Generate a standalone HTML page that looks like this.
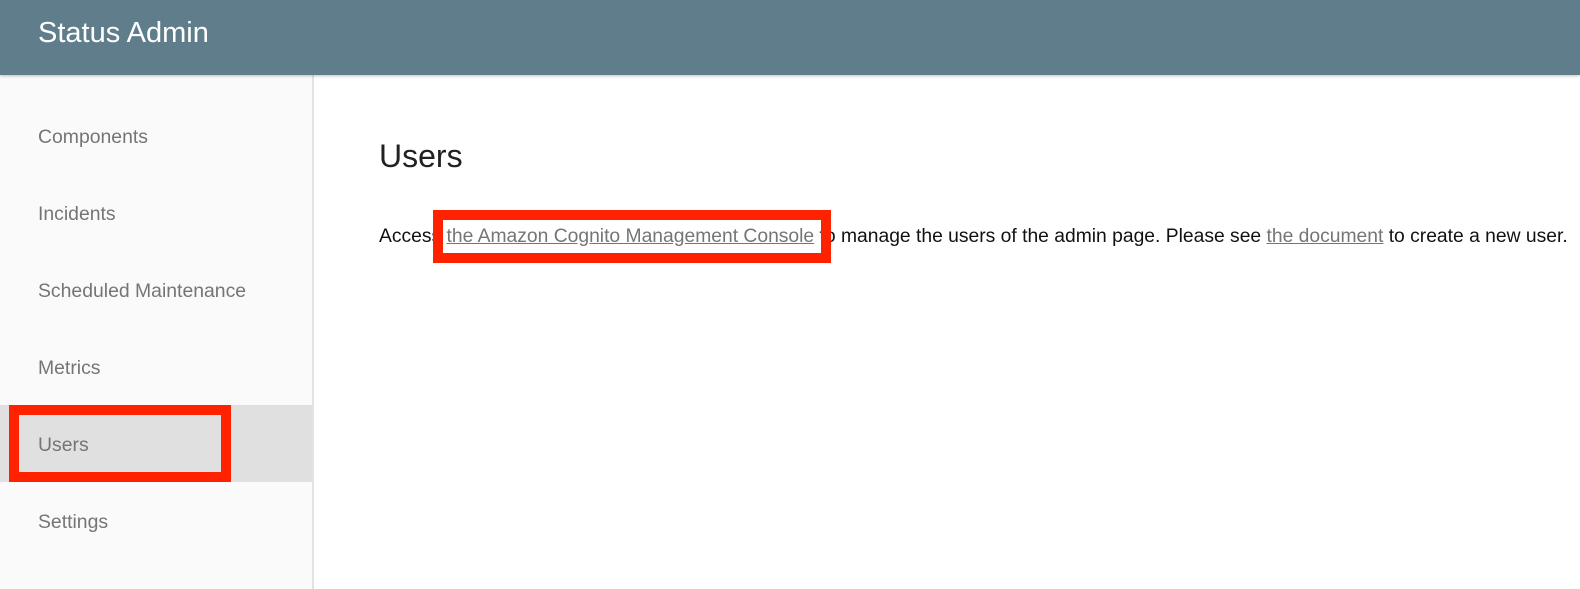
<!DOCTYPE html>
<html><head><meta charset="utf-8"><style>
*{margin:0;padding:0;box-sizing:border-box}
body{width:1580px;height:589px;overflow:hidden;background:#fff;font-family:"Liberation Sans",Arial,sans-serif;position:relative}
.hdr{position:absolute;left:0;top:0;width:1580px;height:75px;background:#607d8b;box-shadow:0 1px 3px rgba(0,0,0,.25);z-index:2}
.hdr span{position:absolute;left:38px;top:16px;color:#fff;font-size:29px;line-height:34px}
.side{position:absolute;left:0;top:75px;width:314px;height:514px;background:#fafafa;border-right:2px solid #e2e2e2}
.item{position:absolute;left:0;width:312px;height:77px;font-size:19.4px;color:#757575;line-height:81px;padding-left:38px}
.sel{background:#e0e0e0}
.red{position:absolute;border:10px solid #ff2200}
h1{position:absolute;left:379px;top:137px;font-size:32px;font-weight:normal;color:#212121;line-height:38px}
p{position:absolute;left:379px;top:226px;font-size:19.3px;color:#111;white-space:nowrap;line-height:22px}
a{color:#757575;text-decoration:underline}
</style></head><body>
<div class="hdr"><span>Status Admin</span></div>
<div class="side">
<div class="item" style="top:22px">Components</div>
<div class="item" style="top:99px">Incidents</div>
<div class="item" style="top:176px">Scheduled Maintenance</div>
<div class="item" style="top:253px">Metrics</div>
<div class="item sel" style="top:330px">Users</div>
<div class="item" style="top:407px">Settings</div>
</div>
<h1>Users</h1>
<p>Access <a>the Amazon Cognito Management Console</a> to manage the users of the admin page. Please see <a>the document</a> to create a new user.</p>
<div class="red" style="left:9px;top:405px;width:222px;height:77px"></div>
<div class="red" style="left:433px;top:210px;width:398px;height:53px"></div>
</body></html>
